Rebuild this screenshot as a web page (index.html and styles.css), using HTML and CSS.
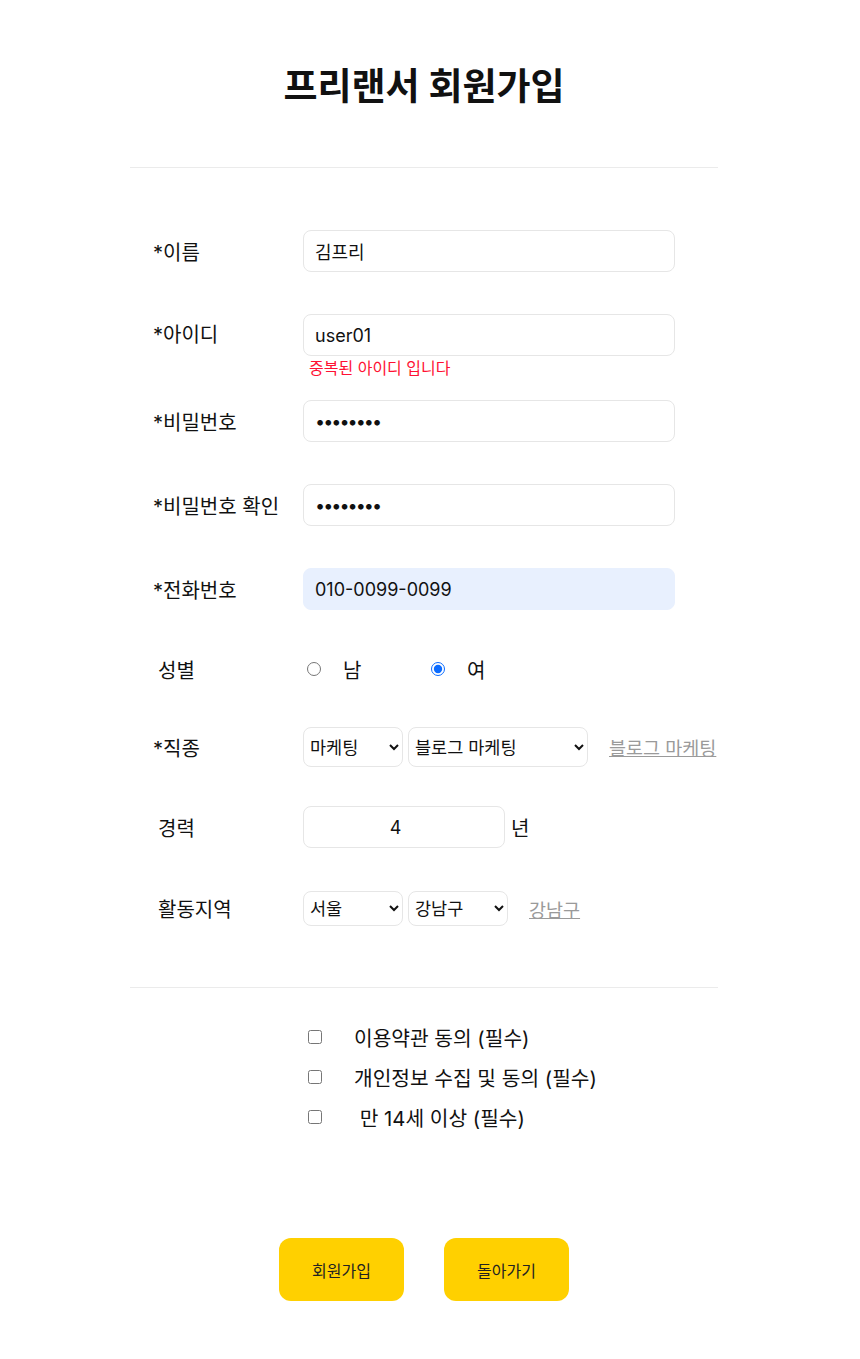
FILE: index.html
```html
<!DOCTYPE html>
<html lang="ko">
<head>
<meta charset="utf-8">
<title>프리랜서 회원가입</title>
<link rel="stylesheet" href="styles.css">
</head>
<body>
<div class="wrap">
  <h1 class="title">프리랜서 회원가입</h1>
  <hr class="line">
  <form class="form">
    <div class="row">
      <label class="label">*이름</label>
      <input class="field" type="text" value="김프리">
    </div>
    <div class="row row-err">
      <label class="label">*아이디</label>
      <div class="col">
        <input class="field" type="text" value="user01">
        <p class="error">중복된 아이디 입니다</p>
      </div>
    </div>
    <div class="row">
      <label class="label">*비밀번호</label>
      <input class="field pw" type="password" value="12345678">
    </div>
    <div class="row">
      <label class="label">*비밀번호 확인</label>
      <input class="field pw" type="password" value="12345678">
    </div>
    <div class="row">
      <label class="label">*전화번호</label>
      <input class="field filled" type="text" value="010-0099-0099">
    </div>
    <div class="row row-gender">
      <label class="label soft">성별</label>
      <div class="radios">
        <label class="radio r1"><input type="radio" name="g"><span>남</span></label>
        <label class="radio"><input type="radio" name="g" checked><span>여</span></label>
      </div>
    </div>
    <div class="row row-job">
      <label class="label">*직종</label>
      <select class="sel sel-s"><option>마케팅</option></select>
      <select class="sel sel-l"><option>블로그 마케팅</option></select>
      <span class="picked">블로그 마케팅</span>
    </div>
    <div class="row row-career">
      <label class="label soft">경력</label>
      <input class="field career" type="text" value="4">
      <span class="unit">년</span>
    </div>
    <div class="row row-area">
      <label class="label soft">활동지역</label>
      <select class="sel sel-s"><option>서울</option></select>
      <select class="sel sel-s"><option>강남구</option></select>
      <span class="picked">강남구</span>
    </div>
  </form>
  <hr class="line">
  <div class="agrees">
    <label class="agree"><input type="checkbox"><span>이용약관 동의 (필수)</span></label>
    <label class="agree"><input type="checkbox"><span>개인정보 수집 및 동의 (필수)</span></label>
    <label class="agree"><input type="checkbox"><span>&nbsp;만 14세 이상 (필수)</span></label>
  </div>
  <div class="buttons">
    <button class="btn" type="button">회원가입</button>
    <button class="btn" type="button">돌아가기</button>
  </div>
</div>
</body>
</html>
```

FILE: styles.css
```css
* { box-sizing: border-box; }
body {
  margin: 0;
  background: #fff;
  color: #111;
  font-family: "Inter", "Noto Sans CJK KR", sans-serif;
}
.wrap {
  width: 588px;
  margin: 0 0 0 130px;
  padding-top: 60px;
}
.title {
  margin: 0;
  text-align: center;
  font-size: 37px;
  line-height: 54px;
  font-weight: 700;
}
.line {
  border: 0;
  border-top: 1px solid #ebebeb;
  margin: 53px 0 0;
}
.form {
  padding: 62px 0 0 23px;
}
.row {
  display: flex;
  align-items: center;
  height: 42px;
  margin-bottom: 42px;
}
.label {
  width: 150px;
  flex: none;
  font-size: 20px;
  color: #111;
}
.label.soft { padding-left: 5px; }
.field {
  width: 372px;
  height: 42px;
  border: 1px solid #e6e6e6;
  border-radius: 8px;
  padding: 0 11px;
  font-family: "Inter", "Noto Sans CJK KR", sans-serif;
  font-size: 18px;
  color: #111;
  background: #fff;
  outline: none;
}
.field.pw { letter-spacing: -2px; }
.field.filled { background: #e8f0fe; border-color: #e8f0fe; }
.row-err { align-items: flex-start; height: 44px; }
.row-err .label { line-height: 42px; }
.col { display: flex; flex-direction: column; }
.error {
  margin: 1px 0 0 6px;
  color: #ff1133;
  font-size: 16px;
  line-height: 22px;
}
.row-gender { height: 34px; margin-bottom: 41px; }
.radios { display: flex; }
.radio { display: flex; align-items: center; font-size: 20px; }
.radio input { margin: 0 22px 0 4px; width: 14px; height: 14px; }
.radio.r1 { width: 124px; }
.radio input[type="radio"]:checked { accent-color: #0b6bff; }
.row-job { height: 40px; margin-bottom: 39px; }
.sel {
  height: 40px;
  border: 1px solid #e6e6e6;
  border-radius: 8px;
  background: #fff;
  font-family: "Inter", "Noto Sans CJK KR", sans-serif;
  font-size: 17.5px;
  color: #111;
  padding: 0 2px;
  margin-right: 5px;
}
.sel-s { width: 100px; }
.sel-l { width: 180px; }
.picked {
  margin-left: 16px;
  color: #9a9a9a;
  font-size: 18.5px;
  text-decoration: underline;
}
.row-career { margin-bottom: 43px; }
.career { width: 202px; text-align: center; padding-right: 28px; }
.unit { margin-left: 6px; font-size: 20px; }
.row-area { height: 35px; margin-bottom: 61px; }
.row-area .sel { height: 35px; }
.agrees {
  padding: 29px 0 0 173px;
  display: flex;
  flex-direction: column;
}
.agree {
  display: flex;
  align-items: center;
  height: 40px;
  font-size: 20.3px;
}
.agree input { margin: 0 32px 0 5px; width: 14px; height: 14px; }
.buttons {
  display: flex;
  justify-content: center;
  gap: 40px;
  margin-top: 101px;
  padding-bottom: 58px;
}
.btn {
  width: 125px;
  height: 63px;
  border: 0;
  border-radius: 12px;
  background: #ffd000;
  color: #222;
  font-family: "Inter", "Noto Sans CJK KR", sans-serif;
  font-size: 16px;
}
```
